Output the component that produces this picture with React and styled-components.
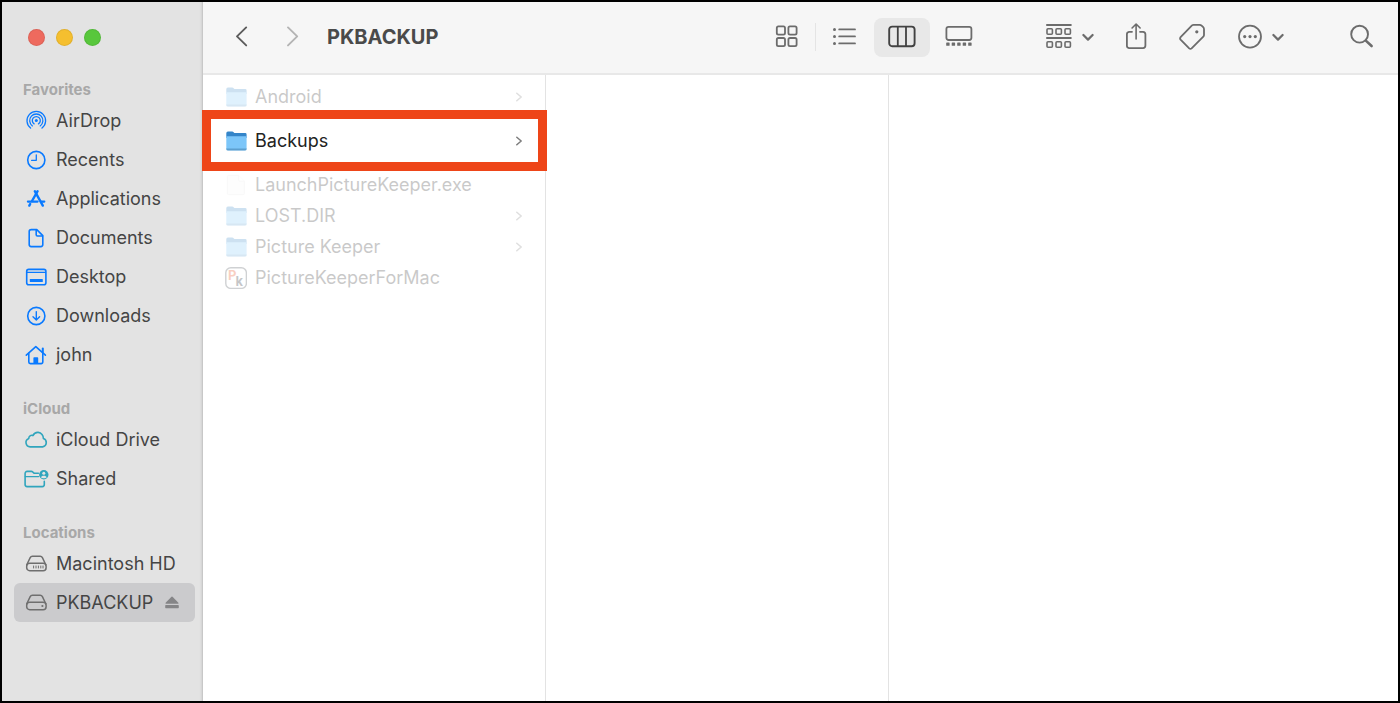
import React, { useState } from "react";
import styled, { createGlobalStyle } from "styled-components";

const blue = "#0a7aff";
const teal = "#30a5bd";
const gray = "#6c6c6c";

// sidebar icons, all drawn on a 28 x 24 canvas

const SideIcon = ({ color = blue, children }) => (
  <svg
    width="28"
    height="24"
    viewBox="0 0 28 24"
    fill="none"
    stroke={color}
    strokeWidth="1.6"
    strokeLinecap="round"
    strokeLinejoin="round"
    aria-hidden="true"
  >
    {children}
  </svg>
);

const AirDropIcon = () => (
  <SideIcon>
    <circle cx="14.3" cy="11.6" r="1.5" fill={blue} stroke="none" />
    <g strokeWidth="1.3">
      <path d="M12.1 14.9A4 4 0 1 1 16.5 14.9" />
      <path d="M10.4 16.9A6.6 6.6 0 1 1 18.2 16.9" />
      <path d="M8.6 19A9.3 9.3 0 1 1 20 19" />
    </g>
  </SideIcon>
);

const RecentsIcon = () => (
  <SideIcon>
    <circle cx="14.3" cy="12" r="8.6" />
    <path d="M14.3 6.8V12.3H9.6" strokeWidth="1.3" />
  </SideIcon>
);

const ApplicationsIcon = () => (
  <SideIcon>
    <g strokeWidth="2.4">
      <path d="M15.6 4.2L10 14" />
      <path d="M12.8 4.2L20.8 18.6" />
      <path d="M8.2 17L7.3 18.6" />
    </g>
    <path d="M5.9 14.6H15.6M19.3 14.6H22.3" strokeWidth="2.2" />
  </SideIcon>
);

const DocumentsIcon = () => (
  <SideIcon>
    <path d="M9 3.6H14.8L20.8 9.6V18.6A2 2 0 0 1 18.8 20.6H9.2A2 2 0 0 1 7.2 18.6V5.6A2 2 0 0 1 9.2 3.6" />
    <path d="M14.2 4V8.8A1.2 1.2 0 0 0 15.4 10H20.4" />
  </SideIcon>
);

const DesktopIcon = () => (
  <SideIcon>
    <rect x="4.7" y="4.4" width="19.2" height="15.4" rx="2" />
    <path d="M5 7.4H23.6" strokeWidth="1.1" />
    <rect x="7.8" y="14" width="13" height="3" rx="0.6" fill={blue} stroke="none" />
  </SideIcon>
);

const DownloadsIcon = () => (
  <SideIcon>
    <circle cx="14.3" cy="12" r="8.6" />
    <path d="M14.3 7.6V15.8M11 12.8L14.3 16.1L17.6 12.8" strokeWidth="1.4" />
  </SideIcon>
);

const HomeIcon = () => (
  <SideIcon>
    <path d="M4.3 12.2L13.8 3.7L23.4 12.2" />
    <path d="M6.8 10.4V19A1.6 1.6 0 0 0 8.4 20.6H19.2A1.6 1.6 0 0 0 20.8 19V10.4" />
    <path d="M20.8 5.4V9.2" strokeWidth="2" />
    <path d="M11.4 21V15A0.8 0.8 0 0 1 12.2 14.2H15.4A0.8 0.8 0 0 1 16.2 15V21Z" fill={blue} stroke="none" />
  </SideIcon>
);

const CloudIcon = () => (
  <SideIcon color={teal}>
    <path d="M8.2 18.9A4.4 4.4 0 0 1 6.8 10.4C6.6 8.2 9 6.6 10.9 7.6C12 5.4 14 4.2 16.2 4.4C19.3 4.7 21.6 7.4 21.4 10.6A4.3 4.3 0 0 1 20.7 18.9Z" />
  </SideIcon>
);

const SharedIcon = () => (
  <SideIcon color={teal}>
    <path d="M16.4 6.2H12L10.6 4.9C10.2 4.5 9.8 4.4 9.3 4.4H5.1A2 2 0 0 0 3.1 6.4V17.6A2 2 0 0 0 5.1 19.6H20.3A2 2 0 0 0 22.3 17.6V14.4" />
    <path d="M3.4 9.6H16.6" strokeWidth="1.3" />
    <circle cx="21.8" cy="7.8" r="4.7" fill={teal} stroke="none" />
    <circle cx="21.8" cy="6.3" r="1.5" fill="#e3e3e3" stroke="none" />
    <path d="M19 10.6C19.2 8 24.4 8 24.6 10.6C23.6 11.6 20 11.6 19 10.6Z" fill="#e3e3e3" stroke="none" />
  </SideIcon>
);

const DriveIcon = ({ vents }) => (
  <SideIcon color="#6f6f6f">
    <path
      d="M4.8 12.8L8.2 5.6A2.6 2.6 0 0 1 10.4 4.2H18.2A2.6 2.6 0 0 1 20.4 5.6L23.8 12.8"
      strokeWidth="1.5"
    />
    <rect x="4.7" y="11.3" width="19.4" height="7.4" rx="3" strokeWidth="1.5" />
    {vents ? (
      <path
        d="M11.6 13.6V16.4M14 13.6V16.4M16.4 13.6V16.4M18.8 13.6V16.4M21 13.6V16.4"
        strokeWidth="1"
        strokeLinecap="butt"
      />
    ) : (
      <circle cx="20.4" cy="15" r="1.1" fill="#6f6f6f" stroke="none" />
    )}
  </SideIcon>
);

const EjectIcon = () => (
  <svg width="14" height="14" viewBox="0 0 14 14" fill="#858587" aria-hidden="true">
    <path d="M6.5 0.7Q7 0.2 7.5 0.7L13.4 6.7Q14 7.8 12.9 7.8H1.1Q0 7.8 0.6 6.7Z" />
    <rect x="0.2" y="9" width="13.6" height="3.2" rx="0.7" />
  </svg>
);

// toolbar icons

const ToolIcon = ({ width, height = 28, color = gray, children }) => (
  <svg
    width={width}
    height={height}
    viewBox={`0 0 ${width} ${height}`}
    fill="none"
    stroke={color}
    strokeWidth="1.8"
    strokeLinecap="round"
    strokeLinejoin="round"
    aria-hidden="true"
  >
    {children}
  </svg>
);

const GridIcon = () => (
  <ToolIcon width={24}>
    <rect x="2.8" y="3.4" width="8.2" height="8.2" rx="1.6" />
    <rect x="14.4" y="3.4" width="8.2" height="8.2" rx="1.6" />
    <rect x="2.8" y="15" width="8.2" height="8.2" rx="1.6" />
    <rect x="14.4" y="15" width="8.2" height="8.2" rx="1.6" />
  </ToolIcon>
);

const ListIcon = () => (
  <ToolIcon width={24}>
    <path d="M6.2 6.4H22M6.2 13.4H22M6.2 20.4H22" />
    <g fill={gray} stroke="none">
      <circle cx="1.5" cy="6.4" r="1.5" />
      <circle cx="1.5" cy="13.4" r="1.5" />
      <circle cx="1.5" cy="20.4" r="1.5" />
    </g>
  </ToolIcon>
);

const ColumnsIcon = () => (
  <ToolIcon width={28} color="#424242">
    <rect x="1.2" y="3.6" width="25.4" height="19.6" rx="3" strokeWidth="1.9" />
    <path d="M9.8 3.8V23M18 3.8V23" />
  </ToolIcon>
);

const GalleryIcon = () => (
  <ToolIcon width={28}>
    <rect x="1.4" y="3.8" width="25" height="13.2" rx="2.2" />
    <g fill={gray} stroke="none">
      <rect x="1.2" y="19.4" width="3.4" height="3.4" rx="0.6" />
      <rect x="6.7" y="19.4" width="3.4" height="3.4" rx="0.6" />
      <rect x="12.2" y="19.4" width="3.4" height="3.4" rx="0.6" />
      <rect x="17.7" y="19.4" width="3.4" height="3.4" rx="0.6" />
      <rect x="23.2" y="19.4" width="3.4" height="3.4" rx="0.6" />
    </g>
  </ToolIcon>
);

const GroupIcon = () => (
  <ToolIcon width={26}>
    <path d="M0.9 2H24.9M0.9 15H24.9" />
    <g strokeWidth="1.6">
      <rect x="1" y="5.8" width="5.4" height="5.4" rx="1" />
      <rect x="10" y="5.8" width="5.4" height="5.4" rx="1" />
      <rect x="19" y="5.8" width="5.4" height="5.4" rx="1" />
      <rect x="1" y="18.8" width="5.4" height="5.4" rx="1" />
      <rect x="10" y="18.8" width="5.4" height="5.4" rx="1" />
      <rect x="19" y="18.8" width="5.4" height="5.4" rx="1" />
    </g>
  </ToolIcon>
);

const DownIcon = () => (
  <ToolIcon width={12}>
    <path d="M1.4 12L6 16.6L10.6 12" strokeWidth="2.2" />
  </ToolIcon>
);

const ShareIcon = () => (
  <ToolIcon width={21}>
    <path d="M6 8.8H3A2.5 2.5 0 0 0 0.9 11.3V22.6A2.5 2.5 0 0 0 3 25.1H17A2.5 2.5 0 0 0 19.4 22.6V11.3A2.5 2.5 0 0 0 17 8.8H14" />
    <path d="M10.1 16V1.4M6.1 5L10.1 1L14.1 5" strokeWidth="1.6" />
  </ToolIcon>
);

const TagIcon = () => (
  <ToolIcon width={27}>
    <path d="M13 2.4Q13.7 1.8 14.6 1.8H20.6Q21.8 1.8 22.6 2.6L24.2 4.2Q25 5 25 6.2V12Q25 13 24.3 13.7L12.6 25.4Q11.4 26.4 10.2 25.4L1.6 16.6Q0.6 15.4 1.6 14.2Z" />
    <circle cx="17.8" cy="8.8" r="1.6" fill={gray} stroke="none" />
  </ToolIcon>
);

const MoreIcon = () => (
  <ToolIcon width={24}>
    <circle cx="12" cy="13.6" r="11" />
    <g fill={gray} stroke="none">
      <circle cx="6.7" cy="13.6" r="1.6" />
      <circle cx="12" cy="13.6" r="1.6" />
      <circle cx="17.3" cy="13.6" r="1.6" />
    </g>
  </ToolIcon>
);

const SearchIcon = () => (
  <ToolIcon width={24}>
    <circle cx="9.6" cy="11.2" r="8.4" strokeWidth="1.9" />
    <path d="M15.8 17.6L21.6 23" strokeWidth="2.6" />
  </ToolIcon>
);

// file icons

const FolderIcon = () => (
  <svg width="22" height="22" viewBox="0 0 22 22" aria-hidden="true">
    <path
      d="M1.3 3.2A1.6 1.6 0 0 1 2.9 1.6H7.2Q8 1.6 8.6 2.2L9.4 3H20.2A1.4 1.4 0 0 1 21.6 4.4V8H1.3Z"
      fill="#3485c9"
    />
    <path d="M1.3 6.2H21.6V18.6A1.6 1.6 0 0 1 20 20.2H2.9A1.6 1.6 0 0 1 1.3 18.6Z" fill="#7cc6f9" />
    <path d="M1.3 18.5V18.9A1.6 1.6 0 0 0 2.9 20.5H20A1.6 1.6 0 0 0 21.6 18.9V18.5Z" fill="#5c9fcf" />
  </svg>
);

const FileIcon = () => (
  <svg width="22" height="22" viewBox="0 0 22 22" aria-hidden="true">
    <path
      d="M3.6 1.4H13.6L19.4 7.2V19.4A1.2 1.2 0 0 1 18.2 20.6H3.6A1.2 1.2 0 0 1 2.4 19.4V2.6A1.2 1.2 0 0 1 3.6 1.4Z"
      fill="#f7f7f7"
      stroke="#dedede"
      strokeWidth="0.7"
    />
    <path d="M13.6 1.4V6A1.2 1.2 0 0 0 14.8 7.2H19.4" fill="#fff" stroke="#dedede" strokeWidth="0.7" />
  </svg>
);

const PkIcon = () => (
  <svg width="22" height="22" viewBox="0 0 22 22" aria-hidden="true">
    <rect x="0.8" y="0.8" width="20.6" height="20.6" rx="5" fill="#fff" stroke="#3c444c" strokeWidth="1.4" />
    <g fontFamily="Inter, sans-serif" fontWeight="700">
      <text x="3" y="13" fontSize="13" fill="#e83c00">
        P
      </text>
      <text x="10.6" y="18.6" fontSize="13" fill="#10161c">
        k
      </text>
    </g>
  </svg>
);

const sections = [
  {
    title: "Favorites",
    items: [
      { name: "AirDrop", icon: <AirDropIcon /> },
      { name: "Recents", icon: <RecentsIcon /> },
      { name: "Applications", icon: <ApplicationsIcon /> },
      { name: "Documents", icon: <DocumentsIcon /> },
      { name: "Desktop", icon: <DesktopIcon /> },
      { name: "Downloads", icon: <DownloadsIcon /> },
      { name: "john", icon: <HomeIcon /> },
    ],
  },
  {
    title: "iCloud",
    items: [
      { name: "iCloud Drive", icon: <CloudIcon /> },
      { name: "Shared", icon: <SharedIcon /> },
    ],
  },
  {
    title: "Locations",
    items: [
      { name: "Macintosh HD", icon: <DriveIcon vents /> },
      { name: "PKBACKUP", icon: <DriveIcon />, ejectable: true },
    ],
  },
];

const files = [
  { name: "Android", type: "folder" },
  { name: "Backups", type: "folder" },
  { name: "LaunchPictureKeeper.exe", type: "file" },
  { name: "LOST.DIR", type: "folder" },
  { name: "Picture Keeper", type: "folder" },
  { name: "PictureKeeperForMac", type: "app" },
];

const views = [
  { name: "Icons", icon: <GridIcon /> },
  { name: "List", icon: <ListIcon /> },
  { name: "Columns", icon: <ColumnsIcon /> },
  { name: "Gallery", icon: <GalleryIcon /> },
];

const renderFileIcon = (type) => {
  switch (type) {
    case "folder":
      return <FolderIcon />;
    case "app":
      return <PkIcon />;
    default:
      return <FileIcon />;
  }
};

const App = () => {
  const [place, setPlace] = useState("PKBACKUP");
  const [view, setView] = useState("Columns");
  const highlighted = "Backups";

  return (
    <Window>
      <GlobalStyle />
      <Sidebar>
        <WindowControls>
          <Light $color="#ee6a5e" aria-label="Close" />
          <Light $color="#f5bf2f" aria-label="Minimize" />
          <Light $color="#58c73c" aria-label="Zoom" />
        </WindowControls>
        {sections.map((section) => (
          <Section key={section.title}>
            <h2>{section.title}</h2>
            <ul>
              {section.items.map((item) => (
                <Place key={item.name} $active={place === item.name}>
                  <a href="#" onClick={() => setPlace(item.name)}>
                    {item.icon}
                    {item.name}
                  </a>
                  {item.ejectable && (
                    <EjectButton aria-label={`Eject ${item.name}`}>
                      <EjectIcon />
                    </EjectButton>
                  )}
                </Place>
              ))}
            </ul>
          </Section>
        ))}
      </Sidebar>

      <Main>
        <Toolbar>
          <History>
            <IconButton aria-label="Back">
              <ToolIcon width={13} color="#5c5c5c">
                <path d="M11.2 4.4L2 13.4L11.2 22.4" strokeWidth="1.9" />
              </ToolIcon>
            </IconButton>
            <IconButton aria-label="Forward" disabled>
              <ToolIcon width={13} color="#b4b4b4">
                <path d="M2 4.4L11.2 13.4L2 22.4" strokeWidth="1.9" />
              </ToolIcon>
            </IconButton>
          </History>
          <h1>{place}</h1>
          <Views>
            {views.map((item, index) => (
              <React.Fragment key={item.name}>
                {index === 1 && <Divider />}
                <ViewButton
                  aria-label={item.name}
                  $active={view === item.name}
                  onClick={() => setView(item.name)}
                >
                  {item.icon}
                </ViewButton>
              </React.Fragment>
            ))}
          </Views>
          <Actions>
            <IconButton aria-label="Group">
              <GroupIcon />
              <DownIcon />
            </IconButton>
            <IconButton aria-label="Share">
              <ShareIcon />
            </IconButton>
            <IconButton aria-label="Edit tags">
              <TagIcon />
            </IconButton>
            <IconButton aria-label="More">
              <MoreIcon />
              <DownIcon />
            </IconButton>
          </Actions>
          <IconButton aria-label="Search">
            <SearchIcon />
          </IconButton>
        </Toolbar>

        <Browser>
          <Column>
            {files.map((file) => (
              <FileRow key={file.name} $highlighted={file.name === highlighted}>
                <a href="#">
                  {renderFileIcon(file.type)}
                  <span>{file.name}</span>
                  {file.type === "folder" && (
                    <ToolIcon width={10} height={12} color="#7c7c7c">
                      <path d="M2.8 2.2L7.2 6L2.8 9.8" strokeWidth="1.5" />
                    </ToolIcon>
                  )}
                </a>
              </FileRow>
            ))}
          </Column>
          <Column />
          <Preview />
        </Browser>
      </Main>
    </Window>
  );
};

const GlobalStyle = createGlobalStyle`
  * {
    box-sizing: border-box;
    margin: 0;
    padding: 0;
  }

  body {
    font-family: Inter, "Liberation Sans", sans-serif;
    font-size: 18px;
    color: #454545;
  }

  ul {
    list-style: none;
  }

  a {
    color: inherit;
    text-decoration: none;
  }

  button {
    border: none;
    background: none;
    font: inherit;
  }

  svg {
    display: block;
    flex-shrink: 0;
  }
`;

const Window = styled.div`
  display: flex;
  min-height: 100vh;
  border: 2px solid #000;
  background-color: #fff;
`;

const Sidebar = styled.nav`
  display: flex;
  flex-direction: column;
  gap: 22px;
  flex: 0 0 201px;
  padding: 27px 7px 24px 12px;
  background-color: #e3e3e3;
  border-right: 1px solid #c8c8c8;
  box-shadow: inset -2px 0 2px -1px #d2d2d2;
`;

const WindowControls = styled.div`
  display: flex;
  gap: 11px;
  height: 26px;
  padding-left: 14px;
`;

const Light = styled.button`
  width: 17px;
  height: 17px;
  border-radius: 50%;
  background-color: ${(props) => props.$color};
  box-shadow: inset 0 0 0 1px rgba(0, 0, 0, 0.08);
`;

const Section = styled.section`
  h2 {
    padding-top: 2px;
    padding-left: 9px;
    font-size: 15px;
    font-weight: 700;
    line-height: 22px;
    color: #a8a8a8;
  }
`;

const Place = styled.li`
  display: flex;
  align-items: center;
  height: 39px;
  padding: 0 16px 0 8px;
  border-radius: 6px;
  background-color: ${(props) => (props.$active ? "#cbcbcd" : "transparent")};

  a {
    display: flex;
    flex: 1;
    align-items: center;
    gap: 6px;
    white-space: nowrap;
  }
`;

const EjectButton = styled.button`
  width: 14px;
  height: 14px;
`;

const Main = styled.main`
  display: flex;
  flex-direction: column;
  flex: 1;
  min-width: 0;
`;

const Toolbar = styled.header`
  display: flex;
  align-items: center;
  height: 73px;
  padding: 0 24px 1px 32px;
  background-color: #f6f6f6;
  border-bottom: 2px solid #e8e8e8;

  h1 {
    flex: 1;
    font-size: 20px;
    font-weight: 700;
    color: #4a4a4a;
  }
`;

const History = styled.div`
  display: flex;
  gap: 38px;
  margin-right: 28px;
`;

const IconButton = styled.button`
  display: flex;
  align-items: center;
  gap: 10px;
`;

const Views = styled.div`
  display: flex;
  align-items: center;
  gap: 1px;
`;

const ViewButton = styled.button`
  display: flex;
  align-items: center;
  justify-content: center;
  width: 56px;
  height: 39px;
  border-radius: 8px;
  background-color: ${(props) => (props.$active ? "#e8e8e8" : "transparent")};
`;

const Divider = styled.span`
  width: 1px;
  height: 28px;
  background-color: #e4e4e4;
`;

const Actions = styled.div`
  display: flex;
  align-items: center;
  gap: 32px;
  margin: 0 66px 0 59px;
`;

const Browser = styled.div`
  display: flex;
  flex: 1;
`;

const Column = styled.ul`
  flex: 0 0 343px;
  padding-top: 6px;
  border-right: 1px solid #e3e3e3;
`;

const Preview = styled.section`
  flex: 1;
`;

const FileRow = styled.li`
  position: relative;
  z-index: ${(props) => (props.$highlighted ? 1 : 0)};
  margin: ${(props) => (props.$highlighted ? "-2px -2px -2px -1px" : "0")};
  border: ${(props) => (props.$highlighted ? "9px solid #ee4518" : "none")};
  background-color: #fff;

  a {
    display: flex;
    align-items: center;
    gap: 8px;
    height: ${(props) => (props.$highlighted ? "43px" : "31px")};
    padding: ${(props) => (props.$highlighted ? "0 14px" : "0 21px 0 22px")};
    color: #222;
    opacity: ${(props) => (props.$highlighted ? 1 : 0.24)};
  }

  span {
    flex: 1;
    white-space: nowrap;
  }
`;

export default App;
